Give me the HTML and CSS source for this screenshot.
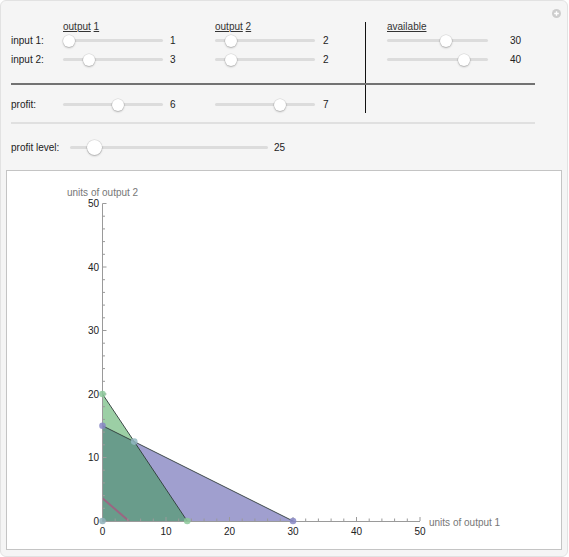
FILE: index.html
```html
<!DOCTYPE html>
<html lang="en">
    <head>
        <meta charset="UTF-8" />
        <meta name="viewport" content="width=device-width, initial-scale=1.0" />
        <title>Linear Programming - Two Outputs</title>

        <link rel="stylesheet" href="styles.css">
    </head>
    <body>
        <div class="panel">
            <span class="plus_btn">
                <svg width="9" height="9" viewBox="0 0 9 9">
                    <circle cx="4.5" cy="4.5" r="4.5" fill="#cdcdcd" />
                    <path d="M4.5 2.2v4.6M2.2 4.5h4.6" stroke="#fff" stroke-width="1.4" />
                </svg>
            </span>

            <div class="controls">
                <div class="grid">
                    <div class="vline"></div>
                    <div class="thick_rule"></div>

                    <span></span>
                    <span class="head"><u>output</u> <u>1</u></span>
                    <span></span>
                    <span class="head"><u>output</u> <u>2</u></span>
                    <span></span>
                    <span class="head"><u>available</u></span>
                    <span></span>

                    <span class="label">input 1:</span>
                    <input class="slider" type="range" min="1" max="10" value="1" />
                    <span class="value v1">1</span>
                    <input class="slider" type="range" min="1" max="10" value="2" />
                    <span class="value v2">2</span>
                    <input class="slider" type="range" min="0" max="50" value="30" />
                    <span class="value v3">30</span>

                    <span class="label">input 2:</span>
                    <input class="slider" type="range" min="1" max="10" value="3" />
                    <span class="value v1">3</span>
                    <input class="slider" type="range" min="1" max="10" value="2" />
                    <span class="value v2">2</span>
                    <input class="slider" type="range" min="0" max="50" value="40" />
                    <span class="value v3">40</span>

                    <span class="label">profit:</span>
                    <input class="slider" type="range" min="1" max="10" value="6" />
                    <span class="value v1">6</span>
                    <input class="slider" type="range" min="1" max="10" value="7" />
                    <span class="value v2">7</span>
                </div>

                <div class="light_rule"></div>

                <div class="level_row">
                    <span class="level_label">profit level:</span>
                    <input class="slider big" type="range" min="0" max="270" value="25" />
                    <span class="level_value">25</span>
                </div>
            </div>

            <div class="plot">
                <svg width="554" height="378" viewBox="0 0 554 378">
                    <!-- feasible regions -->
                    <polygon points="95.5,350 286,350 95.5,254.75" fill="#a09fcf" />
                    <polygon points="95.5,350 180.2,350 95.5,223" fill="#9ccfa5" />
                    <polygon points="95.5,350 180.2,350 127.25,270.6 95.5,254.75" fill="#699c8b" />

                    <line x1="95.5" y1="254.75" x2="286" y2="350" stroke="#2f3a3a" stroke-width="0.9" />
                    <line x1="95.5" y1="223" x2="180.2" y2="350" stroke="#2f3a3a" stroke-width="0.9" />

                    <!-- profit line -->
                    <line x1="95.5" y1="327.3" x2="121.9" y2="350" stroke="#9b6682" stroke-width="2" />

                    <!-- axes -->
                    <g stroke="#9a9a9a" stroke-width="1" fill="none">
                        <path d="M95.5 32.5V350.5M95.5 350.5H413" />
                        <path d="M95.5 350v-4M108.2 350v-2.5M120.9 350v-2.5M133.6 350v-2.5M146.3 350v-2.5M159 350v-4M171.7 350v-2.5M184.4 350v-2.5M197.1 350v-2.5M209.8 350v-2.5M222.5 350v-4M235.2 350v-2.5M247.9 350v-2.5M260.6 350v-2.5M273.3 350v-2.5M286 350v-4M298.7 350v-2.5M311.4 350v-2.5M324.1 350v-2.5M336.8 350v-2.5M349.5 350v-4M362.2 350v-2.5M374.9 350v-2.5M387.6 350v-2.5M400.3 350v-2.5M413 350v-4" />
                        <path d="M95.5 350h4M95.5 337.3h2.5M95.5 324.6h2.5M95.5 311.9h2.5M95.5 299.2h2.5M95.5 286.5h4M95.5 273.8h2.5M95.5 261.1h2.5M95.5 248.4h2.5M95.5 235.7h2.5M95.5 223h4M95.5 210.3h2.5M95.5 197.6h2.5M95.5 184.9h2.5M95.5 172.2h2.5M95.5 159.5h4M95.5 146.8h2.5M95.5 134.1h2.5M95.5 121.4h2.5M95.5 108.7h2.5M95.5 96h4M95.5 83.3h2.5M95.5 70.6h2.5M95.5 57.9h2.5M95.5 45.2h2.5M95.5 32.5h4" />
                    </g>

                    <!-- corner points -->
                    <circle cx="95.5" cy="223" r="3.3" fill="#8cc89a" fill-opacity="0.85" />
                    <circle cx="180.2" cy="350" r="3.3" fill="#8cc89a" fill-opacity="0.85" />
                    <circle cx="95.5" cy="254.75" r="3.3" fill="#8787c4" fill-opacity="0.85" />
                    <circle cx="286" cy="350" r="3.3" fill="#8787c4" fill-opacity="0.85" />
                    <circle cx="127.25" cy="270.6" r="3.3" fill="#93b8c2" fill-opacity="0.85" />
                    <circle cx="95.5" cy="350" r="3.3" fill="#8eb0ba" fill-opacity="0.85" />

                    <!-- tick labels -->
                    <g class="tick_text" text-anchor="end">
                        <text x="92" y="353.5">0</text>
                        <text x="92" y="290">10</text>
                        <text x="92" y="226.5">20</text>
                        <text x="92" y="163">30</text>
                        <text x="92" y="99.5">40</text>
                        <text x="92" y="36">50</text>
                    </g>
                    <g class="tick_text" text-anchor="middle">
                        <text x="95.5" y="364">0</text>
                        <text x="159" y="364">10</text>
                        <text x="222.5" y="364">20</text>
                        <text x="286" y="364">30</text>
                        <text x="349.5" y="364">40</text>
                        <text x="413" y="364">50</text>
                    </g>

                    <text class="axis_text" x="60" y="24.5">units of output 2</text>
                    <text class="axis_text" x="422" y="354.5">units of output 1</text>
                </svg>
            </div>
        </div>
    </body>
</html>
```

FILE: styles.css
```css
body {
    margin: 0;
    font-family: "Liberation Sans", Arial, sans-serif;
    font-size: 10px;
    color: #222;
    background: #ffffff;
}

.panel {
    position: relative;
    width: 568px;
    height: 557px;
    box-sizing: border-box;
    padding: 18px 5px 6px;
    background: #f5f5f5;
    border: 1px solid #e2e2e2;
    border-radius: 6px;
}

.plus_btn {
    position: absolute;
    top: 8px;
    right: 6px;
    width: 9px;
    height: 9px;
    line-height: 0;
}

.controls {
    margin-left: 5px;
    width: 524px;
}

.grid {
    display: grid;
    grid-template-columns: 52px 100px 52px 100px 50px 22px 101px 47px;
    grid-template-rows: 12px 19px 19px 26px 19px;
    align-items: center;
}

.vline {
    grid-column: 6;
    grid-row: 1 / 6;
    align-self: stretch;
    width: 1px;
    margin-top: 3px;
    margin-bottom: 1px;
    background: #111;
}

.thick_rule {
    grid-column: 1 / -1;
    grid-row: 4;
    align-self: start;
    height: 2px;
    margin-top: 14px;
    background: #727272;
}

.head {
    align-self: start;
    margin-top: 2px;
    line-height: 12px;
    color: #333;
}

.head u {
    text-underline-offset: 1px;
}

.label {
    color: #222;
}

.value {
    color: #222;
}

.v1 {
    padding-left: 7px;
}

.v2 {
    padding-left: 8px;
}

.v3 {
    padding-left: 22px;
}

.slider {
    -webkit-appearance: none;
    appearance: none;
    width: 100%;
    height: 13px;
    margin: 0;
    padding: 0;
    background: transparent;
}

.slider::-webkit-slider-runnable-track {
    height: 3px;
    background: #dcdcdc;
    border-radius: 2px;
}

.slider::-webkit-slider-thumb {
    -webkit-appearance: none;
    width: 12px;
    height: 12px;
    margin-top: -4.5px;
    border-radius: 50%;
    background: #ffffff;
    box-shadow: 0 0 0 0.5px rgba(0, 0, 0, 0.12), 0 1px 2px rgba(0, 0, 0, 0.25);
}

.slider.big {
    width: 198px;
    height: 16px;
}

.slider.big::-webkit-slider-thumb {
    width: 15px;
    height: 15px;
    margin-top: -6px;
}

.light_rule {
    height: 2px;
    margin-top: 8px;
    background: #e0e0e0;
}

.level_row {
    display: flex;
    align-items: center;
    height: 22px;
    margin-top: 12px;
}

.level_label {
    width: 59px;
}

.level_value {
    margin-left: 6px;
}

.plot {
    height: 380px;
    margin-top: 12px;
    box-sizing: border-box;
    background: #ffffff;
    border: 1px solid #c4c4c4;
    line-height: 0;
}

.tick_text {
    font-family: "Liberation Sans", Arial, sans-serif;
    font-size: 10px;
    fill: #222;
}

.axis_text {
    font-family: "Liberation Sans", Arial, sans-serif;
    font-size: 10px;
    fill: #777;
}
```
